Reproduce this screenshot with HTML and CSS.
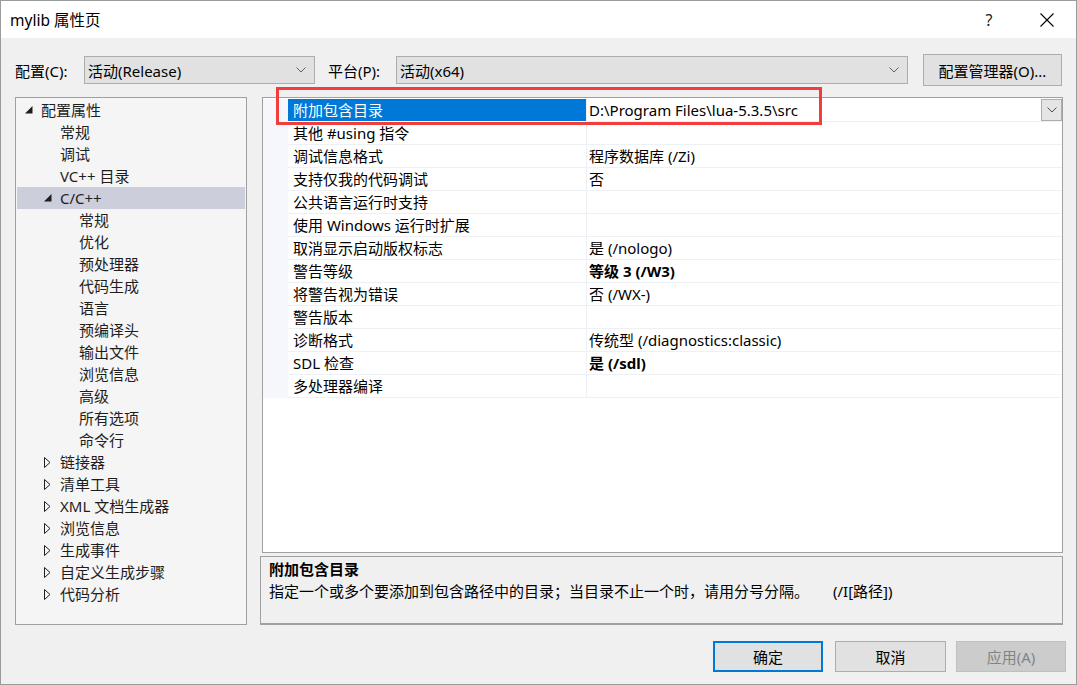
FILE: index.html
```html
<!DOCTYPE html>
<html lang="zh-CN">
<head>
  <meta charset="UTF-8" />
  <title>mylib 属性页</title>
  <link rel="stylesheet" href="styles.css">
</head>
<body>
  <div class="window">
    <div class="titlebar">
      <span class="title">mylib 属性页</span>
      <span class="title-btn help">?</span>
      <span class="title-btn close">
        <svg width="16" height="16" viewBox="0 0 16 16"><path d="M1.5 1.5 L14.5 14.5 M14.5 1.5 L1.5 14.5" stroke="#000" stroke-width="1.1" fill="none"/></svg>
      </span>
    </div>

    <div class="toolbar">
      <span class="label label-config">配置(C):</span>
      <div class="combo combo-config">
        <span>活动(Release)</span>
        <svg class="chev" width="10" height="6" viewBox="0 0 10 6"><path d="M0.5 0.5 L5 5 L9.5 0.5" stroke="#606060" fill="none"/></svg>
      </div>
      <span class="label label-platform">平台(P):</span>
      <div class="combo combo-platform">
        <span>活动(x64)</span>
        <svg class="chev" width="10" height="6" viewBox="0 0 10 6"><path d="M0.5 0.5 L5 5 L9.5 0.5" stroke="#606060" fill="none"/></svg>
      </div>
      <button class="btn btn-manager">配置管理器(O)...</button>
    </div>

    <div class="main">
      <div class="tree">
        <div class="node lv0"><span class="arrow"><svg width="8" height="8" viewBox="0 0 8 8"><path d="M0 7.5 L7.5 7.5 L7.5 0 Z" fill="#1e1e1e"/></svg></span>配置属性</div>
        <div class="node lv1"><span class="arrow"></span>常规</div>
        <div class="node lv1"><span class="arrow"></span>调试</div>
        <div class="node lv1"><span class="arrow"></span>VC++ 目录</div>
        <div class="node lv1 selected"><span class="arrow"><svg width="8" height="8" viewBox="0 0 8 8"><path d="M0 7.5 L7.5 7.5 L7.5 0 Z" fill="#1e1e1e"/></svg></span>C/C++</div>
        <div class="node lv2">常规</div>
        <div class="node lv2">优化</div>
        <div class="node lv2">预处理器</div>
        <div class="node lv2">代码生成</div>
        <div class="node lv2">语言</div>
        <div class="node lv2">预编译头</div>
        <div class="node lv2">输出文件</div>
        <div class="node lv2">浏览信息</div>
        <div class="node lv2">高级</div>
        <div class="node lv2">所有选项</div>
        <div class="node lv2">命令行</div>
        <div class="node lv1"><span class="arrow"><svg width="7" height="11" viewBox="0 0 7 11"><path d="M0.5 0.5 L6 5.5 L0.5 10.5 Z" stroke="#1e1e1e" fill="none"/></svg></span>链接器</div>
        <div class="node lv1"><span class="arrow"><svg width="7" height="11" viewBox="0 0 7 11"><path d="M0.5 0.5 L6 5.5 L0.5 10.5 Z" stroke="#1e1e1e" fill="none"/></svg></span>清单工具</div>
        <div class="node lv1"><span class="arrow"><svg width="7" height="11" viewBox="0 0 7 11"><path d="M0.5 0.5 L6 5.5 L0.5 10.5 Z" stroke="#1e1e1e" fill="none"/></svg></span>XML 文档生成器</div>
        <div class="node lv1"><span class="arrow"><svg width="7" height="11" viewBox="0 0 7 11"><path d="M0.5 0.5 L6 5.5 L0.5 10.5 Z" stroke="#1e1e1e" fill="none"/></svg></span>浏览信息</div>
        <div class="node lv1"><span class="arrow"><svg width="7" height="11" viewBox="0 0 7 11"><path d="M0.5 0.5 L6 5.5 L0.5 10.5 Z" stroke="#1e1e1e" fill="none"/></svg></span>生成事件</div>
        <div class="node lv1"><span class="arrow"><svg width="7" height="11" viewBox="0 0 7 11"><path d="M0.5 0.5 L6 5.5 L0.5 10.5 Z" stroke="#1e1e1e" fill="none"/></svg></span>自定义生成步骤</div>
        <div class="node lv1"><span class="arrow"><svg width="7" height="11" viewBox="0 0 7 11"><path d="M0.5 0.5 L6 5.5 L0.5 10.5 Z" stroke="#1e1e1e" fill="none"/></svg></span>代码分析</div>
      </div>

      <div class="right">
        <div class="grid">
          <div class="row active">
            <div class="gutter"></div>
            <div class="name">附加包含目录</div>
            <div class="value">
              <span>D:\Program Files\lua-5.3.5\src</span>
              <span class="drop"><svg width="10" height="6" viewBox="0 0 10 6"><path d="M0.5 0.5 L5 5 L9.5 0.5" stroke="#505050" fill="none"/></svg></span>
            </div>
          </div>
          <div class="row"><div class="gutter"></div><div class="name">其他 #using 指令</div><div class="value"></div></div>
          <div class="row"><div class="gutter"></div><div class="name">调试信息格式</div><div class="value">程序数据库 (/Zi)</div></div>
          <div class="row"><div class="gutter"></div><div class="name">支持仅我的代码调试</div><div class="value">否</div></div>
          <div class="row"><div class="gutter"></div><div class="name">公共语言运行时支持</div><div class="value"></div></div>
          <div class="row"><div class="gutter"></div><div class="name">使用 Windows 运行时扩展</div><div class="value"></div></div>
          <div class="row"><div class="gutter"></div><div class="name">取消显示启动版权标志</div><div class="value">是 (/nologo)</div></div>
          <div class="row"><div class="gutter"></div><div class="name">警告等级</div><div class="value bold">等级 3 (/W3)</div></div>
          <div class="row"><div class="gutter"></div><div class="name">将警告视为错误</div><div class="value">否 (/WX-)</div></div>
          <div class="row"><div class="gutter"></div><div class="name">警告版本</div><div class="value"></div></div>
          <div class="row"><div class="gutter"></div><div class="name">诊断格式</div><div class="value">传统型 (/diagnostics:classic)</div></div>
          <div class="row"><div class="gutter"></div><div class="name">SDL 检查</div><div class="value bold">是 (/sdl)</div></div>
          <div class="row"><div class="gutter"></div><div class="name">多处理器编译</div><div class="value"></div></div>
        </div>
        <div class="desc">
          <div class="desc-title">附加包含目录</div>
          <div class="desc-text">指定一个或多个要添加到包含路径中的目录；当目录不止一个时，请用分号分隔。<span class="switch">(/I[路径])</span></div>
        </div>
      </div>
    </div>

    <div class="footer">
      <button class="btn btn-ok">确定</button>
      <button class="btn btn-cancel">取消</button>
      <button class="btn btn-apply" disabled>应用(A)</button>
    </div>

    <!-- annotation box drawn over the first property row -->
    <div class="highlight"></div>
  </div>
</body>
</html>
```

FILE: styles.css
```css
:root {
  --face: #f0f0f0;
  --panel-border: #a0a0a0;
  --ctrl-bg: #e1e1e1;
  --ctrl-border: #adadad;
  --accent: #0078d7;
  --row-line: #edf0f5;
}

* {
  box-sizing: border-box;
}

body {
  margin: 0;
  background: var(--face);
  font-family: "Noto Sans", "Noto Sans CJK SC", sans-serif;
  font-size: 15px;
  color: #000;
}

.window {
  position: relative;
  width: 1077px;
  height: 685px;
  border: 1px solid #9b9b9b;
  background: var(--face);
  display: flex;
  flex-direction: column;
}

/* title bar */
.titlebar {
  height: 37px;
  background: #fff;
  display: flex;
  align-items: center;
  padding: 0 6px 0 9px;
  flex-shrink: 0;
}

.title {
  font-size: 15.5px;
}

.title-btn {
  width: 46px;
  height: 37px;
  display: flex;
  align-items: center;
  justify-content: center;
}

.help {
  margin-left: auto;
  margin-right: 12px;
  font-size: 16px;
  color: #222;
}

.close svg {
  display: block;
}

/* config row */
.toolbar {
  display: flex;
  align-items: center;
  height: 32px;
  margin-top: 16px;
  padding-left: 14px;
}

.label {
  white-space: nowrap;
}

.label-config {
  width: 69px;
}

.label-platform {
  width: 68px;
  margin-left: 13px;
}

.combo {
  height: 28px;
  background: var(--ctrl-bg);
  border: 1px solid var(--ctrl-border);
  display: flex;
  align-items: center;
  padding: 0 8px 0 3px;
}

.combo .chev {
  margin-left: auto;
}

.combo-config {
  width: 231px;
}

.combo-platform {
  width: 512px;
}

.btn {
  font-family: inherit;
  font-size: 15px;
  color: #000;
  background: var(--ctrl-bg);
  border: 1px solid var(--ctrl-border);
  padding: 0;
}

.btn-manager {
  width: 139px;
  height: 32px;
  margin-left: 15px;
}

/* main area */
.main {
  display: flex;
  gap: 15px;
  height: 528px;
  margin-top: 11px;
  padding-left: 14px;
}

.tree {
  width: 232px;
  border: 1px solid var(--panel-border);
  background: #f5f5f5;
  padding-top: 1px;
  color: #1e1e1e;
}

.node {
  height: 22px;
  line-height: 22px;
  display: flex;
  align-items: center;
  white-space: nowrap;
}

.node .arrow {
  width: 19px;
  display: flex;
  align-items: center;
  padding-left: 3px;
}

.node .arrow svg {
  display: block;
}

.lv0 {
  padding-left: 6px;
}

.lv1 {
  padding-left: 25px;
}

.lv2 {
  padding-left: 63px;
}

.node.selected {
  background: #cccedb;
  margin: 0 1px;
  padding-left: 24px;
}

.right {
  width: 801px;
  display: flex;
  flex-direction: column;
  gap: 3px;
}

.grid {
  height: 456px;
  border: 1px solid var(--panel-border);
  background: #fff;
  padding-top: 1px;
}

.row {
  display: flex;
  height: 23px;
  line-height: 22px;
}

.gutter {
  width: 25px;
  background: #f5f7fc;
}

.name {
  width: 298px;
  padding-left: 5px;
  border-bottom: 1px solid var(--row-line);
  white-space: nowrap;
}

.value {
  flex: 1;
  display: flex;
  padding-left: 2px;
  border-left: 1px solid var(--row-line);
  border-bottom: 1px solid var(--row-line);
  white-space: nowrap;
}

.value.bold {
  font-weight: bold;
}

.row.active .name {
  background: var(--accent);
  color: #fff;
  border-bottom-color: #fff;
}

.drop {
  margin-left: auto;
  width: 21px;
  height: 22px;
  background: #e5e5e5;
  border: 1px solid var(--ctrl-border);
  display: flex;
  align-items: center;
  justify-content: center;
}

.desc {
  height: 69px;
  margin-left: -2px;
  border: 1px solid var(--panel-border);
  border-bottom-width: 2px;
  background: var(--face);
  padding: 1px 8px 0;
  line-height: 22px;
}

.desc-title {
  font-weight: bold;
}

.switch {
  margin-left: 24px;
}

/* bottom buttons */
.footer {
  display: flex;
  justify-content: flex-end;
  margin-top: 16px;
  padding-right: 10px;
}

.footer .btn {
  width: 110px;
  height: 31px;
}

.btn-ok {
  border: 2px solid var(--accent);
  margin-right: 12px;
}

.btn-cancel {
  width: 111px !important;
  margin-right: 10px;
}

.btn-apply {
  background: #cccccc;
  border-color: #bfbfbf;
  color: #838383;
}

.highlight {
  position: absolute;
  left: 275px;
  top: 86px;
  width: 546px;
  height: 38px;
  border: 3px solid #f23d3d;
  pointer-events: none;
}
```
